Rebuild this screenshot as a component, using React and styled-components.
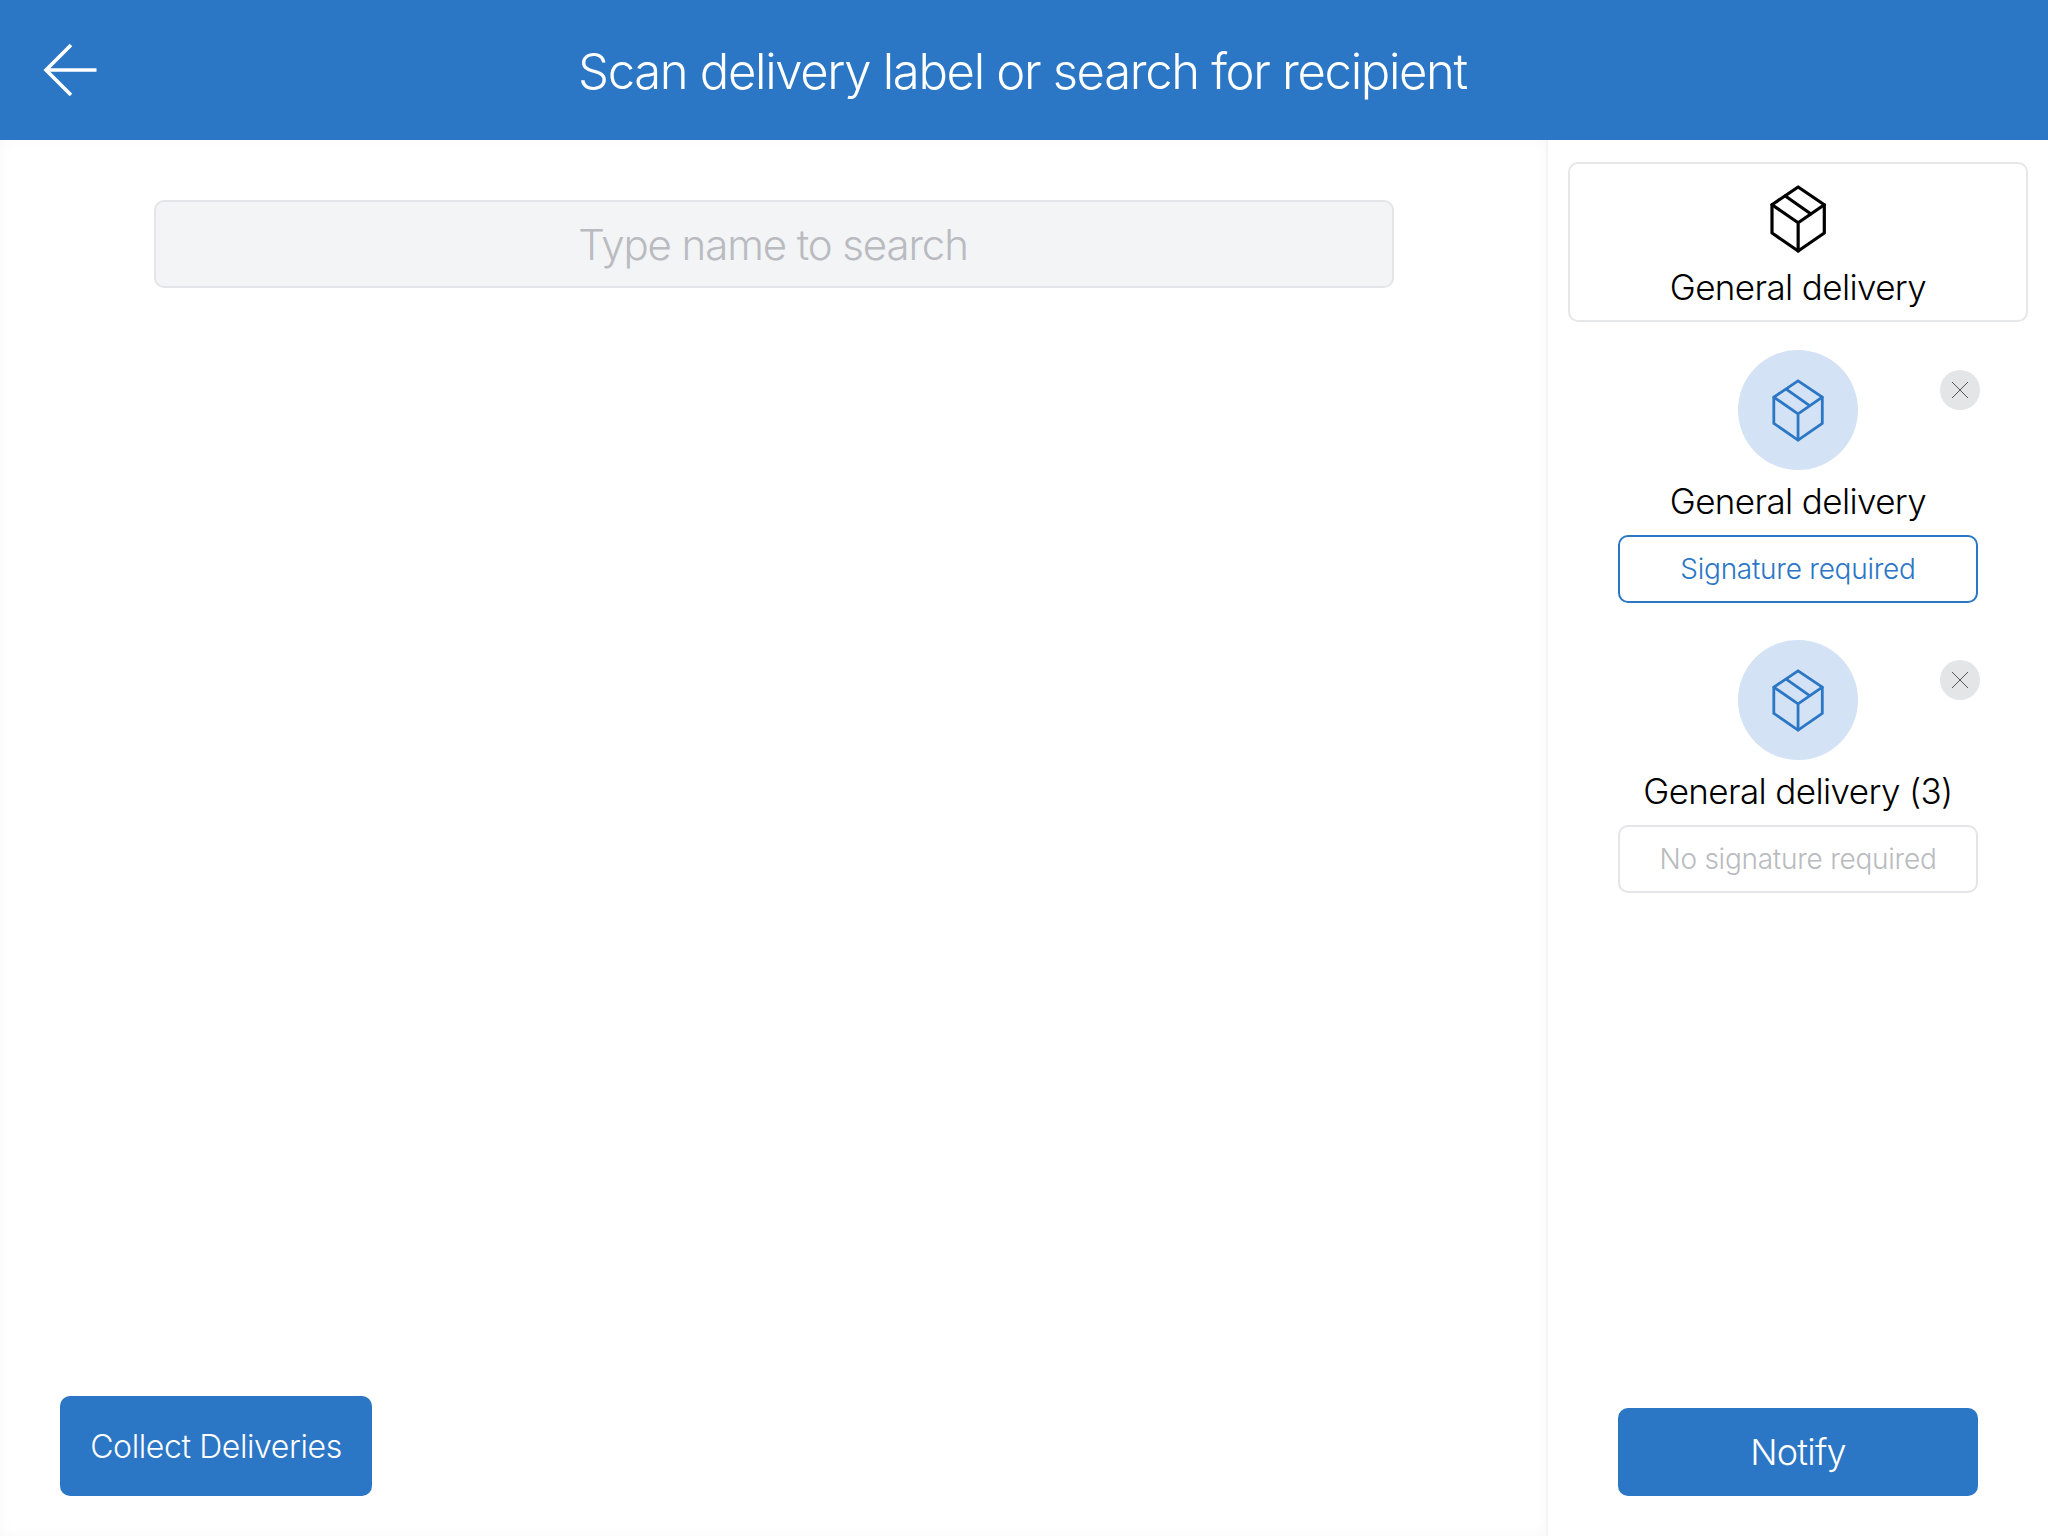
import React from "react";
import styled, { createGlobalStyle } from "styled-components";

const Global = createGlobalStyle`
  html, body { margin: 0; padding: 0; background: #fff; }
  body { font-family: Inter, "Noto Sans", "Liberation Sans", sans-serif; }
  * { box-sizing: border-box; }
`;

const Page = styled.div`
  width: 2048px;
  height: 1536px;
  display: flex;
  flex-direction: column;
  overflow: hidden;
`;

const Header = styled.header`
  height: 140px;
  flex: none;
  background: #2b76c5;
  display: flex;
  align-items: center;
  justify-content: center;
  position: relative;
`;

const BackIcon = styled.svg`
  position: absolute;
  left: 40px;
  top: 40px;
`;

const Title = styled.h1`
  margin: 0 3px -2px 0;
  font-size: 49px;
  font-weight: 300;
  letter-spacing: -1.33px;
  color: #fff;
`;

const Body = styled.div`
  flex: 1;
  display: flex;
  min-height: 0;
`;

const Main = styled.main`
  flex: 1;
  padding: 60px 0 40px 60px;
  display: flex;
  flex-direction: column;
  justify-content: space-between;
  align-items: flex-start;
  box-shadow: inset 0 0 14px rgba(0, 0, 0, 0.03);
`;

const Search = styled.div`
  width: 1240px;
  height: 88px;
  margin-left: 94px;
  padding-right: 2px;
  background: #f3f4f6;
  border: 2px solid #e4e5e8;
  border-radius: 10px;
  display: flex;
  align-items: center;
  justify-content: center;
  font-size: 42px;
  font-weight: 300;
  letter-spacing: -1.1px;
  color: #b9bbc0;
`;

const CollectButton = styled.button`
  width: 312px;
  height: 100px;
  border: 0;
  border-radius: 10px;
  background: #2b76c5;
  color: #fff;
  font-family: inherit;
  font-size: 32px;
  font-weight: 350;
  letter-spacing: -0.4px;
`;

const Sidebar = styled.aside`
  width: 502px;
  flex: none;
  border-left: 2px solid #f4f4f5;
  padding: 22px 20px 40px 20px;
  display: flex;
  flex-direction: column;
  align-items: center;
`;

const TypeCard = styled.div`
  width: 460px;
  height: 160px;
  border: 2px solid #e6e7e9;
  border-radius: 10px;
  display: flex;
  flex-direction: column;
  align-items: center;
  padding-top: 20px;
`;

const Label = styled.div`
  font-size: 35px;
  font-weight: 300;
  letter-spacing: -0.62px;
  line-height: 44px;
  color: #000;
`;

const CardLabel = styled(Label)`
  margin-top: 11px;
`;

const Delivery = styled.section`
  width: 360px;
  margin-top: ${(p) => p.$gap}px;
  display: flex;
  flex-direction: column;
  align-items: center;
  position: relative;
`;

const Circle = styled.div`
  width: 120px;
  height: 120px;
  border-radius: 50%;
  background: #d3e2f4;
  display: flex;
  align-items: center;
  justify-content: center;
`;

const Remove = styled.button`
  position: absolute;
  top: 20px;
  right: -2px;
  width: 40px;
  height: 40px;
  padding: 0;
  border: 0;
  border-radius: 50%;
  background: #e4e5e7;
  display: flex;
  align-items: center;
  justify-content: center;
`;

const DeliveryLabel = styled(Label)`
  margin-top: 9px;
  margin-bottom: 1px;
`;

const Tag = styled.div`
  width: 360px;
  height: 68px;
  margin-top: 11px;
  border-radius: 10px;
  border: 2px solid ${(p) => (p.$active ? "#2b76c5" : "#e4e5e8")};
  color: ${(p) => (p.$active ? "#2b76c5" : "#b9bbc0")};
  display: flex;
  align-items: center;
  justify-content: center;
  font-size: 28px;
  font-weight: 300;
  letter-spacing: -0.25px;
`;

const NotifyButton = styled.button`
  width: 360px;
  height: 88px;
  margin-top: auto;
  border: 0;
  border-radius: 10px;
  background: #2b76c5;
  color: #fff;
  font-family: inherit;
  font-size: 36px;
  font-weight: 300;
  letter-spacing: -0.8px;
`;

const BoxIcon = ({ scale, color, stroke }) => (
  <svg width={52.3 * scale + 6} height={64 * scale + 6} viewBox="-3 -3 58.3 70" fill="none" stroke={color} strokeWidth={stroke} strokeLinejoin="round" strokeLinecap="round">
    <path d="M26.15 0 52.3 17.7V46L26.15 64 0 46V17.7Z" />
    <path d="M0 17.7 26.15 35.7 52.3 17.7M26.15 35.7V64M13.3 9 39 27" />
  </svg>
);

const deliveries = [
  { name: "General delivery", tag: "Signature required", active: true, gap: 28 },
  { name: "General delivery (3)", tag: "No signature required", active: false, gap: 37 },
];

export default function App() {
  return (
    <Page>
      <Global />
      <Header>
        <BackIcon width="60" height="60" viewBox="0 0 60 60" fill="none" stroke="#fff" strokeWidth="3.6">
          <path d="M31 5 6 30 31 55M5 30H56.5" />
        </BackIcon>
        <Title>Scan delivery label or search for recipient</Title>
      </Header>
      <Body>
        <Main>
          <Search>Type name to search</Search>
          <CollectButton>Collect Deliveries</CollectButton>
        </Main>
        <Sidebar>
          <TypeCard>
            <BoxIcon scale={1} color="#000" stroke={3.2} />
            <CardLabel>General delivery</CardLabel>
          </TypeCard>
          {deliveries.map((d) => (
            <Delivery key={d.name} $gap={d.gap}>
              <Circle>
                <BoxIcon scale={0.92} color="#2b76c5" stroke={3} />
              </Circle>
              <Remove aria-label="Remove">
                <svg width="18" height="18" viewBox="0 0 18 18" fill="none" stroke="#555" strokeWidth="1">
                  <path d="M1 1 17 17M17 1 1 17" />
                </svg>
              </Remove>
              <DeliveryLabel>{d.name}</DeliveryLabel>
              <Tag $active={d.active}>{d.tag}</Tag>
            </Delivery>
          ))}
          <NotifyButton>Notify</NotifyButton>
        </Sidebar>
      </Body>
    </Page>
  );
}
